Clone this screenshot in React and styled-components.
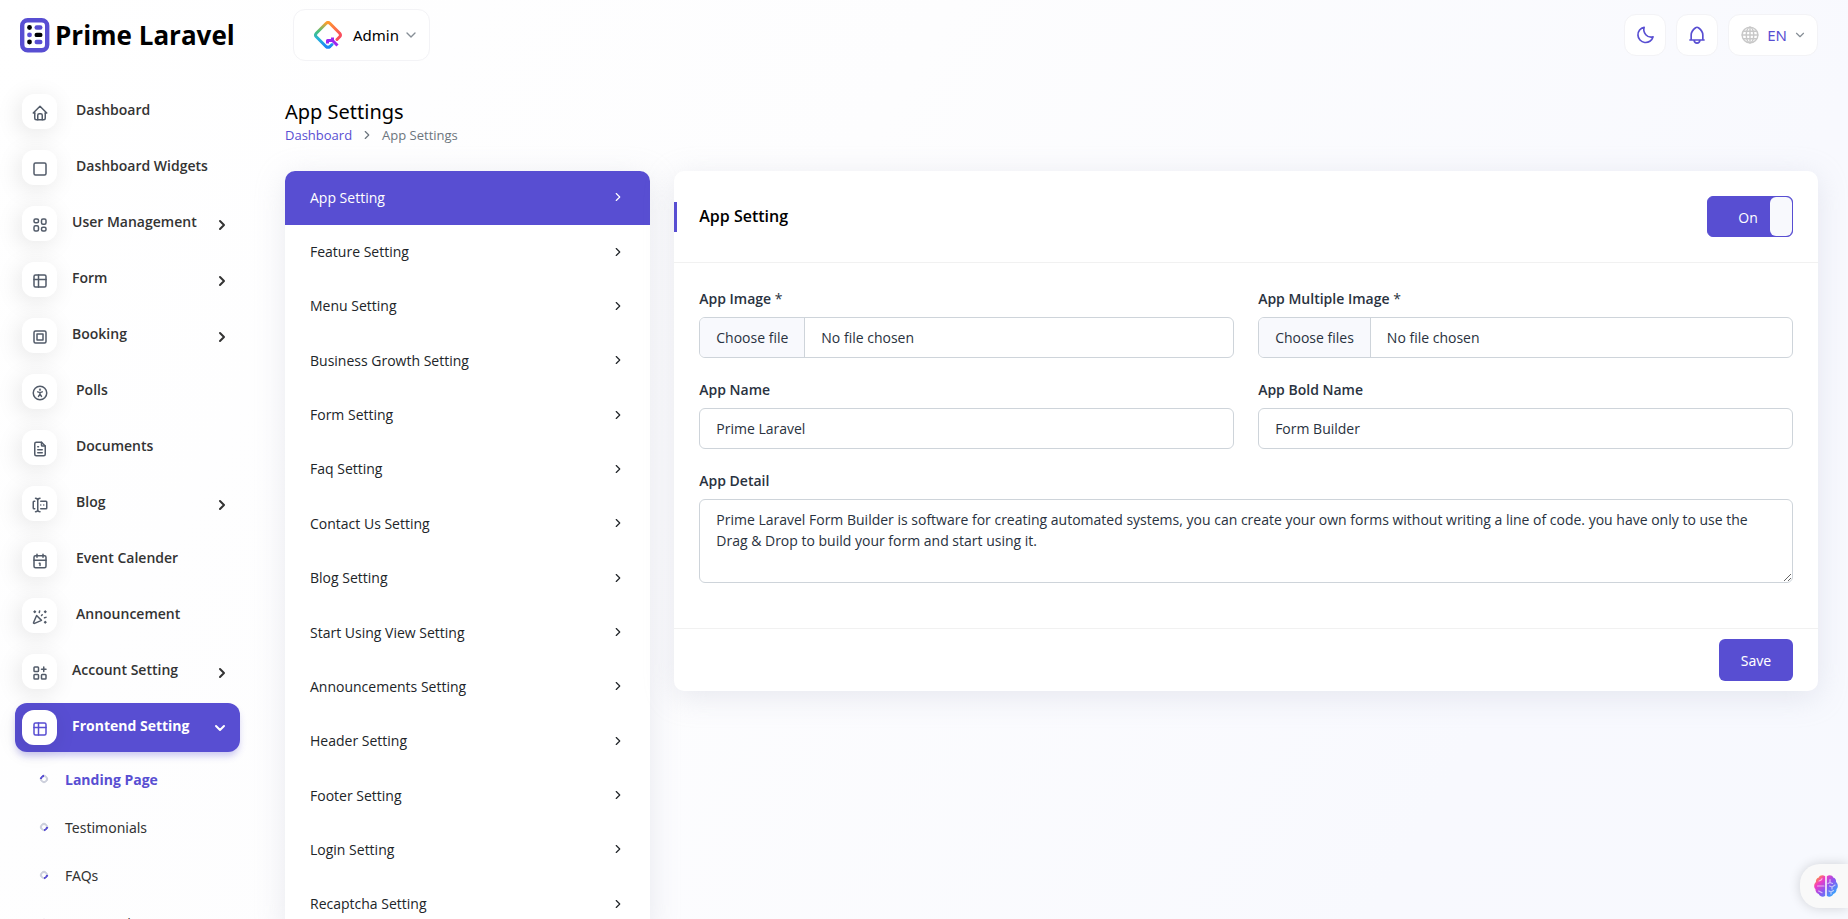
import React from "react";
import styled, { createGlobalStyle, css } from "styled-components";

const PRIMARY = "#584ed2";
const HEADING_FONT = `"Noto Sans", "Open Sans", sans-serif`;

const GlobalStyle = createGlobalStyle`
  *, *::before, *::after { box-sizing: border-box; }
  body {
    margin: 0;
    font-family: "Open Sans", "Noto Sans", sans-serif;
    font-size: 14px;
    line-height: 21px;
    color: #293240;
  }
  button, input, textarea { font: inherit; color: inherit; }
  a { color: inherit; text-decoration: none; }
  ul, ol { list-style: none; margin: 0; padding: 0; }
`;

const Page = styled.div`
  display: flex;
  height: 100vh;
  overflow: hidden;
  background: linear-gradient(120deg, #ffffff 0%, #fdfdfe 40%, #f8f9fe 80%, #f7f9fe 100%);
`;

/* Sidebar */
const Sidebar = styled.aside`
  flex: 0 0 255px;
  padding: 0 15px;
  overflow: hidden;
`;
const Brand = styled.a`
  display: flex;
  align-items: center;
  gap: 5px;
  height: 70px;
  padding-left: 5px;
  margin-bottom: 17px;
  color: #000;
  font-size: 26px;
  font-weight: 700;
  line-height: 36px;
  white-space: nowrap;
`;
const NavList = styled.ul`
  display: flex;
  flex-direction: column;
  gap: 7px;
`;
const NavLink = styled.a`
  display: flex;
  align-items: center;
  height: 49px;
  padding: 7px 10px 7px 7px;
  border-radius: 12px;
  color: #333;
  font-weight: 600;
  ${(p) => p.$active && css`
    padding-right: 12px;
    background: ${PRIMARY};
    color: #fff;
    font-weight: 700;
    box-shadow: 0 5px 7px -1px rgba(88, 78, 210, 0.3);
  `}
`;
const NavIcon = styled.span`
  display: flex;
  align-items: center;
  justify-content: center;
  width: 35px;
  height: 35px;
  padding-top: 3px;
  margin-right: ${(p) => (p.$spaced ? 19 : 15)}px;
  border-radius: 12px;
  background: #fff;
  color: ${(p) => (p.$active ? PRIMARY : "#525b69")};
  box-shadow: -3px 4px 23px rgba(0, 0, 0, 0.1);
`;
const NavText = styled.span`
  flex: 1;
  padding-bottom: 4px;
  white-space: nowrap;
`;
const NavArrow = styled.span`
  display: flex;
  padding-top: ${(p) => (p.$active ? 0 : 2)}px;
`;
const SubList = styled.ul`
  padding-top: 3px;
`;
const SubLink = styled.a`
  display: flex;
  align-items: center;
  gap: 17px;
  height: 48px;
  padding-left: 25px;
  color: #333;
  font-family: ${HEADING_FONT};
  ${(p) => p.$active && css`
    color: ${PRIMARY};
    font-family: inherit;
    font-weight: 700;
  `}
`;
const Bullet = styled.span`
  width: 8px;
  height: 8px;
  border: 2px solid #cdd0dc;
  border-radius: 50%;
  transform: rotate(45deg);
  ${(p) => (p.$active ? css`border-left-color: ${PRIMARY};` : css`border-right-color: ${PRIMARY};`)}
`;

/* Main column */
const Main = styled.main`
  flex: 1;
  min-width: 0;
  padding: 0 30px;
`;
const TopBar = styled.header`
  display: flex;
  align-items: center;
  justify-content: space-between;
  height: 70px;
  padding-left: 8px;
`;
const TopActions = styled.div`
  display: flex;
  gap: 10px;
`;
const TopButton = styled.button`
  display: flex;
  align-items: center;
  justify-content: center;
  height: 42px;
  min-width: 42px;
  padding: 0;
  border: 1px solid #f3f3f6;
  border-radius: 12px;
  background: #fff;
  color: ${PRIMARY};
  font-family: ${HEADING_FONT};
  font-size: 15px;
`;
const LanguageButton = styled(TopButton)`
  gap: 6px;
  padding: 0 10px 0 12px;
`;
const LanguageCode = styled.span`
  padding-left: 2px;
`;
const AccountButton = styled(TopButton)`
  gap: 4px;
  height: 52px;
  padding: 0 10px 0 19px;
  color: #000;
`;
const AccountName = styled.span`
  padding-left: 6px;
`;
const PageHead = styled.div`
  padding: 29px 0 26px;
`;
const PageTitle = styled.h1`
  margin: 0;
  color: #000;
  font-family: ${HEADING_FONT};
  font-size: 20px;
  font-weight: 400;
  line-height: 26px;
`;
const Crumbs = styled.ol`
  display: flex;
  align-items: center;
  gap: 8px;
  font-size: 13px;
  line-height: 20px;
  color: #6c757d;
  a { color: ${PRIMARY}; }
  svg { display: block; }
`;
const Columns = styled.div`
  display: grid;
  grid-template-columns: 1fr 3fr;
  align-items: start;
  margin: 0 -12px;
  > * { margin: 0 12px; min-width: 0; }
`;
const cardStyle = css`
  border-radius: 10px;
  background: #fff;
  box-shadow: 0 6px 30px rgba(182, 186, 203, 0.3);
`;
const SettingMenu = styled.nav`
  ${cardStyle}
  display: grid;
  grid-auto-rows: 1fr;
  min-height: 761px;
  overflow: hidden;
`;
const SettingLink = styled.a`
  display: flex;
  align-items: center;
  justify-content: space-between;
  padding: 0 25px 2px;
  color: ${(p) => (p.$active ? "#fff" : "#212529")};
  background: ${(p) => (p.$active ? PRIMARY : "transparent")};
`;
const Card = styled.form`
  ${cardStyle}
`;
const CardHead = styled.div`
  display: flex;
  align-items: center;
  justify-content: space-between;
  padding: 25px 25px 25px 0;
  border-bottom: 1px solid #f1f1f1;
`;
const CardTitle = styled.h2`
  display: flex;
  align-items: center;
  height: 30px;
  margin: 0;
  padding: 0 0 2px 22px;
  border-left: 3px solid ${PRIMARY};
  color: #000;
  font-size: 16px;
  font-weight: 600;
  line-height: 24px;
`;
const Toggle = styled.label`
  display: flex;
  width: 86px;
  height: 41px;
  border: 1px solid ${PRIMARY};
  border-radius: 6px;
  background: ${PRIMARY};
  color: #fff;
  position: relative;
  input {
    position: absolute;
    inset: 0;
    width: 100%;
    height: 100%;
    margin: 0;
    opacity: 0;
  }
`;
const ToggleText = styled.span`
  flex: 1;
  padding: 10px 0 0 18px;
  text-align: center;
`;
const ToggleHandle = styled.span`
  width: 22px;
  border-radius: 6px;
  background: #f8f9fd;
`;
const CardBody = styled.div`
  display: grid;
  grid-template-columns: 1fr 1fr;
  gap: 21px 24px;
  padding: 25px 25px 45px;
`;
const Field = styled.div`
  display: flex;
  flex-direction: column;
  gap: 8px;
  grid-column: ${(p) => (p.$full ? "1 / -1" : "auto")};
`;
const Label = styled.label`
  font-weight: 600;
`;
const Required = styled.span`
  font-weight: 400;
`;
const controlStyle = css`
  width: 100%;
  border: 1px solid #ced4da;
  border-radius: 6px;
  background: #fff;
`;
const TextInput = styled.input`
  ${controlStyle}
  height: 41px;
  padding: 0 16px;
`;
const TextArea = styled.textarea`
  ${controlStyle}
  display: block;
  height: 84px;
  padding: 9px 16px;
  resize: vertical;
`;
const FileBox = styled.div`
  ${controlStyle}
  display: flex;
  height: 41px;
  line-height: 39px;
  overflow: hidden;
  position: relative;
  input {
    position: absolute;
    inset: 0;
    width: 100%;
    opacity: 0;
  }
`;
const FileButton = styled.span`
  padding: 0 16px;
  border-right: 1px solid #ced4da;
  background: #f8f9fd;
`;
const FileName = styled.span`
  padding: 0 16px;
`;
const CardFoot = styled.div`
  display: flex;
  justify-content: flex-end;
  padding: 10px 25px;
  border-top: 1px solid #f1f1f1;
`;
const SaveButton = styled.button`
  height: 42px;
  min-width: 74px;
  padding: 0 20px;
  border: 0;
  border-radius: 6px;
  background: ${PRIMARY};
  color: #fff;
  font-family: ${HEADING_FONT};
`;
const AssistantTab = styled.button`
  position: fixed;
  right: 0;
  bottom: 11px;
  display: flex;
  align-items: center;
  width: 48px;
  height: 44px;
  padding: 0 0 0 14px;
  border: 0;
  border-radius: 20px 0 0 20px;
  background: #f9f9f9;
  box-shadow: 0 0 12px rgba(0, 0, 0, 0.16);
`;

const Svg = ({ size = 18, stroke = 2, children, ...rest }) => (
  <svg width={size} height={size} viewBox="0 0 24 24" fill="none" stroke="currentColor"
    strokeWidth={stroke} strokeLinecap="round" strokeLinejoin="round" aria-hidden="true" {...rest}>
    {children}
  </svg>
);
const Chevron = ({ down, ...rest }) => (
  <Svg {...rest}><path d={down ? "M6 9l6 6l6 -6" : "M9 6l6 6l-6 6"} /></Svg>
);

const icons = {
  home: <><path d="M5 12H3l9-9l9 9h-2" /><path d="M5 12v7a2 2 0 0 0 2 2h10a2 2 0 0 0 2-2v-7" /><path d="M9 21v-6a2 2 0 0 1 2-2h2a2 2 0 0 1 2 2v6" /></>,
  square: <rect x="4" y="4" width="16" height="16" rx="2" />,
  layout: <><rect x="4" y="4" width="6" height="5" rx="2" /><rect x="4" y="13" width="6" height="7" rx="2" /><rect x="14" y="4" width="6" height="7" rx="2" /><rect x="14" y="15" width="6" height="5" rx="2" /></>,
  table: <><rect x="4" y="4" width="16" height="16" rx="2" /><path d="M4 10h16M10 4v16" /></>,
  frame: <><rect x="4" y="4" width="16" height="16" rx="2" /><rect x="8" y="8" width="8" height="8" /></>,
  polls: <><circle cx="12" cy="12" r="9" /><path d="M10 16.500l2-3l2 3M12 13.500v-2l3-1M9 10.500l3 1" /><circle cx="12" cy="7.500" r="0.500" fill="currentColor" /></>,
  file: <><path d="M14 3v4a1 1 0 0 0 1 1h4" /><path d="M17 21H7a2 2 0 0 1-2-2V5a2 2 0 0 1 2-2h7l5 5v11a2 2 0 0 1-2 2zM9 9h1M9 13h6M9 17h6" /></>,
  forms: <><path d="M12 3a3 3 0 0 0-3 3v12a3 3 0 0 0 3 3M6 3a3 3 0 0 1 3 3v12a3 3 0 0 1-3 3" /><path d="M13 7h7a1 1 0 0 1 1 1v8a1 1 0 0 1-1 1h-7M5 7H4a1 1 0 0 0-1 1v8a1 1 0 0 0 1 1h1M17 12h.01M13 12h.01" /></>,
  calendar: <><rect x="4" y="5" width="16" height="16" rx="2" /><path d="M16 3v4M8 3v4M4 11h16M11 15h1M12 15v3" /></>,
  confetti: <path d="M4 5h2M5 4v2M11.500 4L11 6M18 5h2M19 4v2M15 9l-1 1M18 13l2-.5M18 19h2M19 18v2M14 16.518L7.482 10L3.420 19.262a1 1 0 0 0 1.318 1.318L14 16.518z" />,
  apps: <><rect x="4" y="4" width="6" height="6" rx="1" /><rect x="4" y="14" width="6" height="6" rx="1" /><rect x="14" y="14" width="6" height="6" rx="1" /><path d="M14 7h6M17 4v6" /></>,
};

const navItems = [
  { label: "Dashboard", icon: "home", spaced: true },
  { label: "Dashboard Widgets", icon: "square", spaced: true },
  { label: "User Management", icon: "layout", arrow: true },
  { label: "Form", icon: "table", arrow: true },
  { label: "Booking", icon: "frame", arrow: true },
  { label: "Polls", icon: "polls", spaced: true },
  { label: "Documents", icon: "file", spaced: true },
  { label: "Blog", icon: "forms", spaced: true, arrow: true },
  { label: "Event Calender", icon: "calendar", spaced: true },
  { label: "Announcement", icon: "confetti", spaced: true },
  { label: "Account Setting", icon: "apps", arrow: true },
  {
    label: "Frontend Setting", icon: "table", arrow: true, active: true,
    children: ["Landing Page", "Testimonials", "FAQs", "Page Setting"],
  },
];

const settings = [
  "App Setting", "Feature Setting", "Menu Setting", "Business Growth Setting", "Form Setting",
  "Faq Setting", "Contact Us Setting", "Blog Setting", "Start Using View Setting",
  "Announcements Setting", "Header Setting", "Footer Setting", "Login Setting", "Recaptcha Setting",
];

const BrandMark = () => (
  <svg width="30" height="36" viewBox="0 0 30 36" aria-hidden="true">
    <rect x="2.200" y="3.200" width="25" height="30" rx="5.500" fill="#fff" stroke={PRIMARY} strokeWidth="4.400" />
    <g fill="#000"><circle cx="9.500" cy="10.500" r="2.400" /><circle cx="9.500" cy="25" r="2.400" /><rect x="14.500" y="15.700" width="8" height="4.400" rx="2.200" /></g>
    <g fill={PRIMARY}><circle cx="9.500" cy="17.900" r="2.400" /><rect x="14.500" y="8.300" width="8" height="4.400" rx="2.200" /><rect x="14.500" y="22.800" width="8" height="4.400" rx="2.200" /></g>
  </svg>
);

const AvatarMark = () => (
  <svg width="30" height="30" viewBox="0 0 30 30" fill="none" strokeWidth="3" strokeLinecap="round" strokeLinejoin="round" aria-hidden="true">
    <defs>
      <linearGradient id="markLeft" x1="0" y1="0" x2="0" y2="1"><stop offset="0" stopColor="#ff9f2e" /><stop offset="0.350" stopColor="#49c07a" /><stop offset="0.650" stopColor="#25b4d8" /><stop offset="1" stopColor="#1b84f5" /></linearGradient>
      <linearGradient id="markRight" x1="0" y1="0" x2="1" y2="1"><stop offset="0" stopColor="#ff9a2c" /><stop offset="1" stopColor="#f94363" /></linearGradient>
    </defs>
    <path d="M15 2.500q-1 0-2 1L3.300 13.200q-1.600 1.800 0 3.600L13 26.500q2 1.600 4 0l2-2" stroke="url(#markLeft)" />
    <path d="M15 2.500q1 0 2 1l9.700 9.700q1.500 1.800 0 3.600l-2.700 2.700" stroke="url(#markRight)" />
    <path d="M14.500 23.500v-3h5v-3M18 19l6.500 6.500" stroke="#9b27f0" strokeLinecap="butt" />
  </svg>
);

const Moon = () => (
  <Svg size={20} stroke="2"><path d="M11 2.800A9.200 9.200 0 1 0 21.600 14.300A9 9 0 0 1 11 2.800z" /></Svg>
);
const Bell = () => (
  <Svg size={20} stroke="2"><path d="M3.500 18h17M5 18v-6c0-4 3-7 5.300-8.700a3 3 0 0 1 3.400 0c2.300 1.700 5.300 4.700 5.300 8.700v6M8.500 18.500c.3 2 1.700 3.200 3.500 3.200s3.200-1.200 3.500-3.200" /></Svg>
);
const Globe = () => (
  <Svg size={18} stroke="1.900" color="#c8c8c8"><circle cx="12" cy="12" r="10.500" /><ellipse cx="12" cy="12" rx="5" ry="10.500" /><path d="M12 1.500v21M1.500 12h21M3 7h18M3 17h18" /></Svg>
);
const Brain = () => (
  <svg width="24" height="22" viewBox="0 0 24 22" aria-hidden="true">
    <defs>
      <linearGradient id="brain" gradientUnits="userSpaceOnUse" x1="2" y1="1" x2="22" y2="21"><stop offset="0" stopColor="#ffab1a" /><stop offset="0.250" stopColor="#f23bc4" /><stop offset="0.550" stopColor="#8c55f0" /><stop offset="1" stopColor="#22b8ff" /></linearGradient>
    </defs>
    <path fill="url(#brain)" d="M11.200 1.200C9-.5 5.500 0 4.800 2.500C2.500 3.300 1.600 5 2 7C-.2 8.700-.4 12.300 1.400 14C1.400 16.500 2.500 18.300 4.700 19C6 22 9.500 22.500 11.200 20.800zM12.800 1.200C15-.5 18.500 0 19.200 2.500C21.500 3.300 22.400 5 22 7C24.200 8.700 24.400 12.300 22.600 14C22.600 16.500 21.500 18.300 19.300 19C18 22 14.500 22.500 12.800 20.800z" />
    <path fill="none" stroke="#fff" strokeOpacity="0.600" strokeWidth="1.200" strokeLinecap="round" d="M3.500 11h6.500M5 6c1.500-.2 2.500-1 3-2.200M4.500 16c1.500.2 2 1.500 3.500 1.600M16 4.500v3l2.500 1M16 7.500l-2 1M21 10l-3 2v2M18 12l-2.500-1M15 16l2 1l2.500-1.500M17 17v2" />
  </svg>
);

const NavEntry = ({ item }) => (
  <li>
    <NavLink href="#" $active={item.active}>
      <NavIcon $spaced={item.spaced} $active={item.active}><Svg>{icons[item.icon]}</Svg></NavIcon>
      <NavText>{item.label}</NavText>
      {item.arrow && <NavArrow $active={item.active}><Chevron size={16} stroke={3} down={item.active} /></NavArrow>}
    </NavLink>
    {item.children && (
      <SubList>
        {item.children.map((name, i) => (
          <li key={name}><SubLink href="#" $active={i === 0}><Bullet $active={i === 0} />{name}</SubLink></li>
        ))}
      </SubList>
    )}
  </li>
);

const FileField = ({ id, label, action, multiple }) => (
  <Field>
    <Label htmlFor={id}>{label} <Required>*</Required></Label>
    <FileBox>
      <FileButton>{action}</FileButton>
      <FileName>No file chosen</FileName>
      <input id={id} type="file" multiple={multiple} />
    </FileBox>
  </Field>
);

export default function App() {
  return (
    <>
      <GlobalStyle />
      <Page>
        <Sidebar>
          <Brand href="#"><BrandMark />Prime Laravel</Brand>
          <NavList>{navItems.map((item) => <NavEntry key={item.label} item={item} />)}</NavList>
        </Sidebar>
        <Main>
          <TopBar>
            <AccountButton>
              <AvatarMark /><AccountName>Admin</AccountName><Chevron down size={16} color="#868e96" />
            </AccountButton>
            <TopActions>
              <TopButton aria-label="Dark mode"><Moon /></TopButton>
              <TopButton aria-label="Notifications"><Bell /></TopButton>
              <LanguageButton>
                <Globe /><LanguageCode>EN</LanguageCode><Chevron down size={14} color="#868e96" />
              </LanguageButton>
            </TopActions>
          </TopBar>
          <PageHead>
            <PageTitle>App Settings</PageTitle>
            <Crumbs>
              <li><a href="#">Dashboard</a></li>
              <li><Chevron size={14} /></li>
              <li>App Settings</li>
            </Crumbs>
          </PageHead>
          <Columns>
            <SettingMenu>
              {settings.map((name, i) => (
                <SettingLink key={name} href="#" $active={i === 0}>{name}<Chevron size={14} /></SettingLink>
              ))}
            </SettingMenu>
            <Card onSubmit={(e) => e.preventDefault()}>
              <CardHead>
                <CardTitle>App Setting</CardTitle>
                <Toggle>
                  <ToggleText>On</ToggleText>
                  <ToggleHandle />
                  <input type="checkbox" defaultChecked />
                </Toggle>
              </CardHead>
              <CardBody>
                <FileField id="app-image" label="App Image" action="Choose file" />
                <FileField id="app-images" label="App Multiple Image" action="Choose files" multiple />
                <Field>
                  <Label htmlFor="app-name">App Name</Label>
                  <TextInput id="app-name" defaultValue="Prime Laravel" />
                </Field>
                <Field>
                  <Label htmlFor="app-bold-name">App Bold Name</Label>
                  <TextInput id="app-bold-name" defaultValue="Form Builder" />
                </Field>
                <Field $full>
                  <Label htmlFor="app-detail">App Detail</Label>
                  <TextArea id="app-detail" defaultValue="Prime Laravel Form Builder is software for creating automated systems, you can create your own forms without writing a line of code. you have only to use the Drag & Drop to build your form and start using it." />
                </Field>
              </CardBody>
              <CardFoot><SaveButton type="submit">Save</SaveButton></CardFoot>
            </Card>
          </Columns>
        </Main>
      </Page>
      <AssistantTab aria-label="Assistant"><Brain /></AssistantTab>
    </>
  );
}
